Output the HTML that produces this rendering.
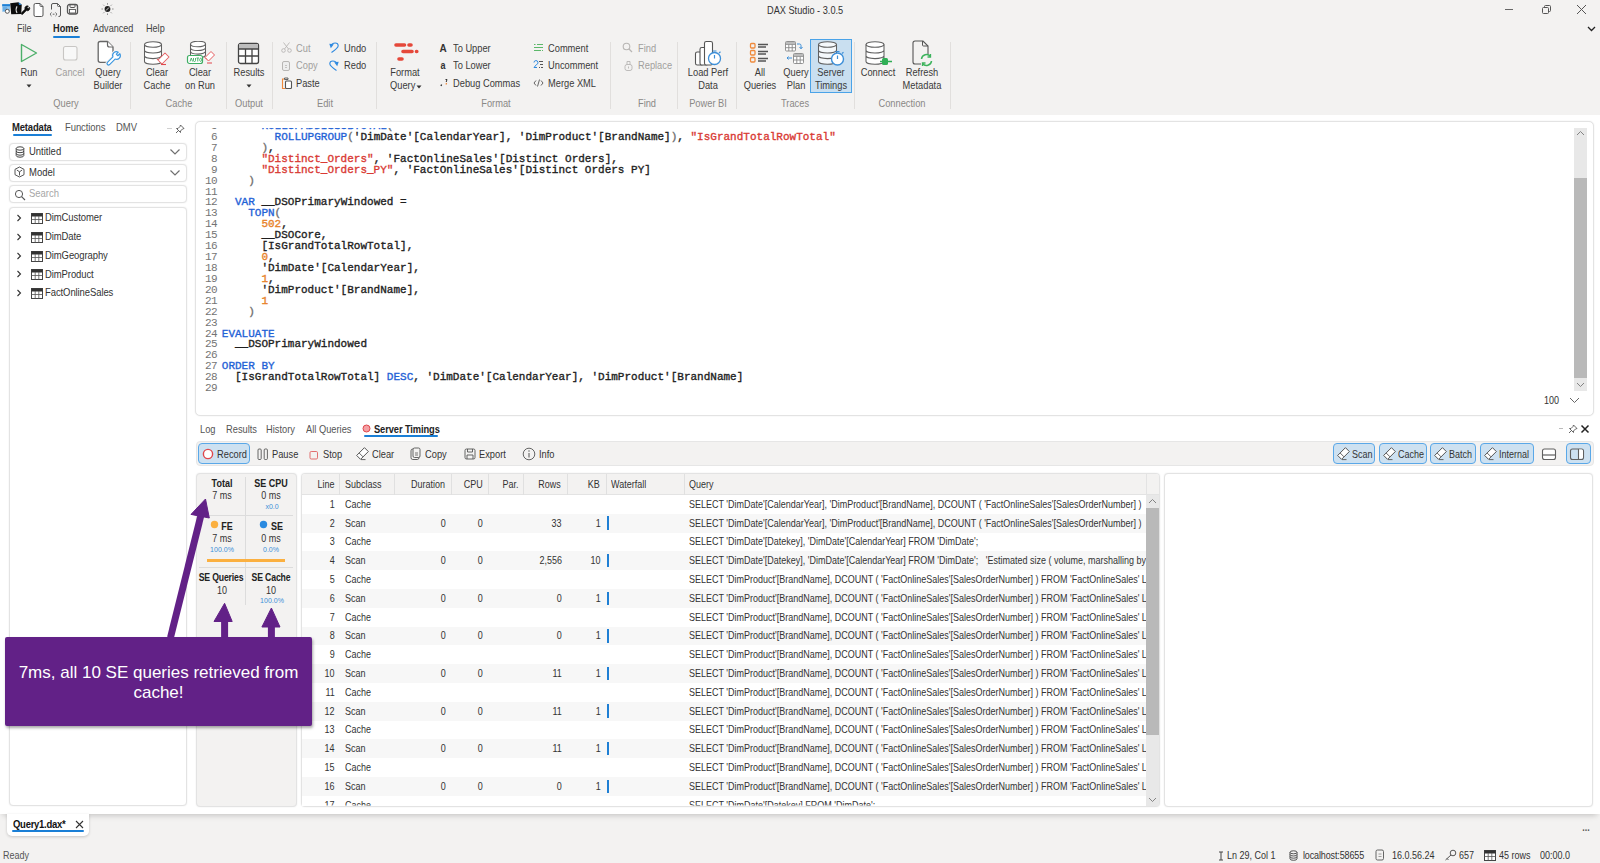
<!DOCTYPE html>
<html><head><meta charset="utf-8"><style>
html,body{margin:0;padding:0;}
body{width:1600px;height:863px;overflow:hidden;position:relative;background:#f3f2f1;font-family:"Liberation Sans", sans-serif;}
.a{position:absolute;box-sizing:border-box;}
.t{position:absolute;white-space:pre;font-family:"Liberation Sans", sans-serif;}
.code{position:absolute;font-family:"Liberation Mono", monospace;white-space:pre;-webkit-text-stroke-width:0.35px;}
</style></head><body>
<div class="a" style="left:0px;top:115px;width:1600px;height:699px;background:#fff;box-shadow:0 4px 6px -3px rgba(0,0,0,0.22);"></div><svg class="a" style="left:0px;top:0px;" width="32" height="18" viewBox="0 0 32 18" fill="none">
<rect x="2.2" y="4.2" width="7.8" height="7.6" fill="#8cc4ee"/>
<rect x="2.2" y="4.2" width="7.8" height="2" fill="#1f7fd4"/>
<path d="M3 8 h4 M3 10 h3" stroke="#3a8fd8" stroke-width="0.8"/>
<circle cx="7.3" cy="11.3" r="2" fill="#fff" stroke="#555" stroke-width="1"/>
<path d="M10.2 3.2 L18.5 2.2 L21.8 4.7 L21.2 14 L11.2 14.2 Z" fill="#0d0d0d"/>
<path d="M18.5 2.2 L21.8 4.7 L19 5 Z" fill="#2a88d8"/>
<path d="M17 6.2 Q15.2 9.5 17 13" stroke="#ddd" stroke-width="1.1" fill="none"/>
<path d="M21.41 12.81 L24.99 9.24 A2.47 2.47 0 0 1 28.46 6.12 L27.16 7.42 L28.18 8.44 L29.48 7.14 A2.47 2.47 0 0 1 26.36 10.61 L22.79 14.19 A0.98 0.98 0 0 1 21.41 12.81 Z" fill="#0d0d0d" stroke="#0d0d0d" stroke-width="0.6" stroke-linejoin="round"/>
</svg><svg class="a" style="left:32px;top:2px;" width="12" height="15" viewBox="0 0 12 15" fill="none"><path d="M2 3 a1.5 1.5 0 0 1 1.5-1.5 h4.5 l3 3 v8.5 a1.5 1.5 0 0 1-1.5 1.5 h-6 a1.5 1.5 0 0 1-1.5-1.5 z" stroke="#555" stroke-width="1" fill="#fff"/><path d="M8 1.5 v2 a1 1 0 0 0 1 1 h2" stroke="#555" stroke-width="0.9" fill="none"/></svg><svg class="a" style="left:49px;top:2px;" width="13" height="15" viewBox="0 0 13 15" fill="none"><path d="M2.5 7.5 v-4.5 a1.5 1.5 0 0 1 1.5-1.5 h4.5 l3 3 v8.5 a1.5 1.5 0 0 1-1.5 1.5 h-0.5" stroke="#555" stroke-width="1" fill="none"/><path d="M8.5 1.5 v2 a1 1 0 0 0 1 1 h2" stroke="#555" stroke-width="0.9" fill="none"/><path d="M2.5 10.5 a2 2 0 0 0 0 3.5 M6.5 10.5 a2 2 0 0 1 0 3.5 M3.7 12.2 h1.8" stroke="#555" stroke-width="0.9" fill="none"/></svg><svg class="a" style="left:66px;top:3px;" width="13" height="12" viewBox="0 0 13 12" fill="none"><rect x="1.5" y="1.5" width="10" height="9.5" rx="2" stroke="#555" stroke-width="1.3" fill="none"/><path d="M4 1.5 v2 a1 1 0 0 0 1 1 h3 a1 1 0 0 0 1-1 v-2" stroke="#555" stroke-width="1"/><rect x="3.5" y="6.5" width="6" height="3.5" fill="#fff" stroke="#555" stroke-width="0.9"/></svg><svg class="a" style="left:100px;top:2px;" width="15" height="15" viewBox="0 0 15 15" fill="none"><circle cx="7.5" cy="7" r="2.9" fill="#222"/><path d="M6 8.5 L9 5.5" stroke="#fff" stroke-width="0.8"/><g stroke="#888" stroke-width="0.9" stroke-linecap="round"><path d="M7.5 1.5v0.8M7.5 11.8v0.8M1.8 7h0.8M12.4 7h0.8M3.5 3l.5.5M11 10.5l.5.5M3.5 11l.5-.5M11 3.5l.5-.5"/></g></svg><div class="t" style="left:767px;top:4.64px;font-size:10.58px;line-height:10.58px;font-weight:400;color:#333;transform:scaleX(0.8696);transform-origin:left top;">DAX Studio - 3.0.5</div><div class="a" style="left:1505px;top:9px;width:8px;height:1px;background:#666;"></div><svg class="a" style="left:1541px;top:4px;" width="11" height="11" viewBox="0 0 11 11" fill="none"><rect x="1.5" y="3.5" width="6" height="6" rx="1" stroke="#555" stroke-width="1"/><path d="M3.5 3.5 v-1 a1 1 0 0 1 1-1 h4 a1 1 0 0 1 1 1 v4 a1 1 0 0 1-1 1 h-1" stroke="#555" stroke-width="1"/></svg><svg class="a" style="left:1576px;top:4px;" width="11" height="11" viewBox="0 0 11 11" fill="none"><path d="M1 1 L10 10 M10 1 L1 10" stroke="#555" stroke-width="1"/></svg><svg class="a" style="left:1587px;top:25.5px;" width="9" height="6" viewBox="0 0 9 6" fill="none"><path d="M1 1 L4.5 4.5 L8 1" stroke="#222" stroke-width="1.3"/></svg><div class="t" style="left:16.5px;top:23.54px;font-size:10.46px;line-height:10.46px;font-weight:400;color:#444;transform:scaleX(0.8696);transform-origin:left top;">File</div><div class="t" style="left:53px;top:23.44px;font-size:10.58px;line-height:10.58px;font-weight:700;color:#222;transform:scaleX(0.8696);transform-origin:left top;">Home</div><div class="a" style="left:53px;top:35.5px;width:27px;height:2px;background:#1a7fd6;border-radius:1px;"></div><div class="t" style="left:92.5px;top:23.54px;font-size:10.46px;line-height:10.46px;font-weight:400;color:#444;transform:scaleX(0.8696);transform-origin:left top;">Advanced</div><div class="t" style="left:146px;top:23.54px;font-size:10.46px;line-height:10.46px;font-weight:400;color:#444;transform:scaleX(0.8696);transform-origin:left top;">Help</div><svg class="a" style="left:19px;top:42px;" width="20" height="22" viewBox="0 0 20 22" fill="none"><path d="M2.5 2.5 L17.5 11 L2.5 19.5 Z" stroke="#4caf6a" stroke-width="1.4" fill="none" stroke-linejoin="round"/></svg><div class="t" style="left:-271px;width:600px;text-align:center;top:66.75px;font-size:10.70px;line-height:10.70px;font-weight:400;color:#3b3a39;transform:scaleX(0.8696);transform-origin:center top;">Run</div><svg class="a" style="left:25.5px;top:84px;" width="6" height="4" viewBox="0 0 6 4" fill="none"><path d="M0.5 0.5 h5 l-2.5 3 z" fill="#333"/></svg><svg class="a" style="left:62px;top:45px;" width="17" height="17" viewBox="0 0 17 17" fill="none"><rect x="1.5" y="1.5" width="13.5" height="13.5" rx="2" stroke="#c8c6c4" stroke-width="1.1" fill="#f8f8f8"/></svg><div class="t" style="left:-230px;width:600px;text-align:center;top:66.75px;font-size:10.70px;line-height:10.70px;font-weight:400;color:#a19f9d;transform:scaleX(0.8696);transform-origin:center top;">Cancel</div><svg class="a" style="left:90px;top:38px;" width="34" height="30" viewBox="0 0 34 30" fill="none"><path d="M8.2 5.5 a2 2 0 0 1 2-2 h7.3 l5.5 5.5 v13.3 a2 2 0 0 1-2 2 h-10.8 a2 2 0 0 1-2-2 z" stroke="#666" stroke-width="1.3" fill="#fff" stroke-linejoin="round"/><path d="M17.5 3.5 V7 a2 2 0 0 0 2 2 H23" stroke="#666" stroke-width="1.2" fill="#fff"/><path d="M17.44 24.44 L22.94 18.94 A3.8 3.8 0 0 1 28.29 14.15 L26.29 16.15 L27.85 17.71 L29.85 15.71 A3.8 3.8 0 0 1 25.06 21.06 L19.56 26.56 A1.5 1.5 0 0 1 17.44 24.44 Z" stroke="#f3f2f1" stroke-width="3" fill="#fff" stroke-linejoin="round"/><path d="M17.44 24.44 L22.94 18.94 A3.8 3.8 0 0 1 28.29 14.15 L26.29 16.15 L27.85 17.71 L29.85 15.71 A3.8 3.8 0 0 1 25.06 21.06 L19.56 26.56 A1.5 1.5 0 0 1 17.44 24.44 Z" stroke="#3d98e0" stroke-width="1.2" fill="#fff" stroke-linejoin="round"/></svg><div class="t" style="left:-192px;width:600px;text-align:center;top:66.75px;font-size:10.70px;line-height:10.70px;font-weight:400;color:#3b3a39;transform:scaleX(0.8696);transform-origin:center top;">Query</div><div class="t" style="left:-192px;width:600px;text-align:center;top:79.75px;font-size:10.70px;line-height:10.70px;font-weight:400;color:#3b3a39;transform:scaleX(0.8696);transform-origin:center top;">Builder</div><div class="a" style="left:130px;top:42px;width:1px;height:67px;background:#e1dfdd;"></div><div class="t" style="left:-234.5px;width:600px;text-align:center;top:97.95px;font-size:10.70px;line-height:10.70px;font-weight:400;color:#8a8886;transform:scaleX(0.8696);transform-origin:center top;">Query</div><svg class="a" style="left:143px;top:41px;" width="28" height="25" viewBox="0 0 28 25" fill="none"><path d="M1.5 3.5 v17 a8.5 2.8 0 0 0 17.0 0 v-17 a8.5 2.8 0 0 0 -17.0 0 z" fill="#fff"/><ellipse cx="10" cy="3.5" rx="8.5" ry="2.8" stroke="#606060" stroke-width="1.05" fill="none"/><path d="M1.5 3.5 v17 a8.5 2.8 0 0 0 17.0 0 v-17 M1.5 9.166666666666668 a8.5 2.8 0 0 0 17.0 0 M1.5 14.833333333333334 a8.5 2.8 0 0 0 17.0 0" stroke="#606060" stroke-width="1.05" fill="none"/><path d="M15 19 l7-7 l4 4 l-7 7 z M17 21 l-3-3" stroke="#e65c5f" stroke-width="1.05" fill="#fff" stroke-linejoin="round"/><path d="M18 23.5 h5" stroke="#e0474c" stroke-width="1.1"/></svg><div class="t" style="left:-143px;width:600px;text-align:center;top:66.75px;font-size:10.70px;line-height:10.70px;font-weight:400;color:#3b3a39;transform:scaleX(0.8696);transform-origin:center top;">Clear</div><div class="t" style="left:-143px;width:600px;text-align:center;top:79.75px;font-size:10.70px;line-height:10.70px;font-weight:400;color:#3b3a39;transform:scaleX(0.8696);transform-origin:center top;">Cache</div><svg class="a" style="left:186px;top:41px;" width="30" height="25" viewBox="0 0 30 25" fill="none"><path d="M4.5 3 v11 a7.5 2.8 0 0 0 15.0 0 v-11 a7.5 2.8 0 0 0 -15.0 0 z" fill="#fff"/><ellipse cx="12" cy="3" rx="7.5" ry="2.8" stroke="#606060" stroke-width="1.05" fill="none"/><path d="M4.5 3 v11 a7.5 2.8 0 0 0 15.0 0 v-11 M4.5 6.666666666666666 a7.5 2.8 0 0 0 15.0 0 M4.5 10.333333333333332 a7.5 2.8 0 0 0 15.0 0" stroke="#606060" stroke-width="1.05" fill="none"/><rect x="1.5" y="14.5" width="15" height="8" rx="2" stroke="#3fae64" stroke-width="1.2" fill="#fff"/><path d="M4 20.5 l1.3-3.5 l1.3 3.5 M7.5 17 v2.5 a1 1 0 0 0 2 0 v-2.5 M10.5 17 h2.5 M11.75 17 v3.5 M14.6 17.2 a1 1.6 0 1 0 0.1 0z" stroke="#3fae64" stroke-width="0.9" fill="none"/><path d="M19 16.5 l6-6 l3.5 3.5 l-6 6 z M21 18.5 l-2-2" stroke="#e65c5f" stroke-width="1.0" fill="#fff"/><path d="M21 22 h5" stroke="#e0474c" stroke-width="1"/></svg><div class="t" style="left:-100px;width:600px;text-align:center;top:66.75px;font-size:10.70px;line-height:10.70px;font-weight:400;color:#3b3a39;transform:scaleX(0.8696);transform-origin:center top;">Clear</div><div class="t" style="left:-100px;width:600px;text-align:center;top:79.75px;font-size:10.70px;line-height:10.70px;font-weight:400;color:#3b3a39;transform:scaleX(0.8696);transform-origin:center top;">on Run</div><div class="a" style="left:226px;top:42px;width:1px;height:67px;background:#e1dfdd;"></div><div class="t" style="left:-121.5px;width:600px;text-align:center;top:97.95px;font-size:10.70px;line-height:10.70px;font-weight:400;color:#8a8886;transform:scaleX(0.8696);transform-origin:center top;">Cache</div><svg class="a" style="left:237px;top:42px;" width="24" height="24" viewBox="0 0 24 24" fill="none"><rect x="1.5" y="1.5" width="20" height="20" rx="2" stroke="#444" stroke-width="1.3" fill="#fff"/><rect x="2" y="2" width="19" height="5" fill="#bdbdbd"/><path d="M1.5 7 h20 M1.5 14 h20 M8.5 7 v14.5 M15 7 v14.5" stroke="#444" stroke-width="1.3"/></svg><div class="t" style="left:-51.5px;width:600px;text-align:center;top:66.75px;font-size:10.70px;line-height:10.70px;font-weight:400;color:#3b3a39;transform:scaleX(0.8696);transform-origin:center top;">Results</div><svg class="a" style="left:245.5px;top:84px;" width="6" height="4" viewBox="0 0 6 4" fill="none"><path d="M0.5 0.5 h5 l-2.5 3 z" fill="#333"/></svg><div class="a" style="left:271.5px;top:42px;width:1px;height:67px;background:#e1dfdd;"></div><div class="t" style="left:-51.5px;width:600px;text-align:center;top:97.95px;font-size:10.70px;line-height:10.70px;font-weight:400;color:#8a8886;transform:scaleX(0.8696);transform-origin:center top;">Output</div><svg class="a" style="left:281px;top:42px;" width="11" height="11" viewBox="0 0 11 11" fill="none"><circle cx="2.5" cy="8.5" r="1.8" stroke="#b8b6b4" stroke-width="0.9"/><circle cx="8.5" cy="8.5" r="1.8" stroke="#b8b6b4" stroke-width="0.9"/><path d="M3.5 7 L8.5 0.5 M7.5 7 L2.5 0.5" stroke="#b8b6b4" stroke-width="0.9"/></svg><div class="t" style="left:296px;top:42.95px;font-size:10.70px;line-height:10.70px;font-weight:400;color:#a19f9d;transform:scaleX(0.8696);transform-origin:left top;">Cut</div><svg class="a" style="left:281px;top:60px;" width="10" height="11" viewBox="0 0 10 11" fill="none"><rect x="1.5" y="1.5" width="7" height="9" rx="1.5" stroke="#b8b6b4" stroke-width="1" fill="#eee"/><path d="M4 5.5 h2 M4 7.5 h2" stroke="#b8b6b4" stroke-width="0.8"/></svg><div class="t" style="left:296px;top:60.45px;font-size:10.70px;line-height:10.70px;font-weight:400;color:#a19f9d;transform:scaleX(0.8696);transform-origin:left top;">Copy</div><svg class="a" style="left:281px;top:77px;" width="12" height="12" viewBox="0 0 12 12" fill="none"><path d="M3 2 h-1.5 v9.5 h3" stroke="#f08a3c" stroke-width="1.1" fill="none"/><rect x="4.5" y="4" width="6" height="7.5" rx="1" stroke="#555" stroke-width="1.1" fill="#fff"/><path d="M3.5 2.5 h3.5 v-1.5 h-3.5z" stroke="#555" stroke-width="0.9"/></svg><div class="t" style="left:296px;top:77.95px;font-size:10.70px;line-height:10.70px;font-weight:400;color:#3b3a39;transform:scaleX(0.8696);transform-origin:left top;">Paste</div><svg class="a" style="left:328px;top:41px;" width="12" height="13" viewBox="0 0 12 13" fill="none"><path d="M3.2 4.5 C4.5 1.2, 10.2 1, 10.2 4.8 C10.2 6.8, 8 8.5, 3.5 11.5" stroke="#2f8ae0" stroke-width="1.1" fill="none"/><path d="M1.3 2.8 L5.8 3.3 L2.8 7.2 Z" fill="#2f8ae0"/></svg><div class="t" style="left:344px;top:42.95px;font-size:10.70px;line-height:10.70px;font-weight:400;color:#3b3a39;transform:scaleX(0.8696);transform-origin:left top;">Undo</div><svg class="a" style="left:328px;top:59px;" width="12" height="13" viewBox="0 0 12 13" fill="none"><path d="M8.8 4.5 C7.5 1.2, 1.8 1, 1.8 4.8 C1.8 6.8, 4 8.5, 8.5 11.5" stroke="#2f8ae0" stroke-width="1.1" fill="none"/><path d="M10.7 2.8 L6.2 3.3 L9.2 7.2 Z" fill="#2f8ae0"/></svg><div class="t" style="left:344px;top:60.45px;font-size:10.70px;line-height:10.70px;font-weight:400;color:#3b3a39;transform:scaleX(0.8696);transform-origin:left top;">Redo</div><div class="a" style="left:376px;top:42px;width:1px;height:67px;background:#e1dfdd;"></div><div class="t" style="left:25px;width:600px;text-align:center;top:97.95px;font-size:10.70px;line-height:10.70px;font-weight:400;color:#8a8886;transform:scaleX(0.8696);transform-origin:center top;">Edit</div><svg class="a" style="left:392px;top:42px;" width="28" height="21" viewBox="0 0 28 21" fill="none"><g stroke="#e5483a" stroke-width="3.6" stroke-linecap="round"><path d="M4 3 h8.5 M17 3 h2 M11 9.5 h9 M24.5 9.5 h0.3 M7 17 h3"/></g></svg><div class="t" style="left:105px;width:600px;text-align:center;top:66.95px;font-size:10.70px;line-height:10.70px;font-weight:400;color:#3b3a39;transform:scaleX(0.8696);transform-origin:center top;">Format</div><div class="t" style="left:390px;top:79.95px;font-size:10.70px;line-height:10.70px;font-weight:400;color:#3b3a39;transform:scaleX(0.8696);transform-origin:left top;">Query</div><svg class="a" style="left:416px;top:85px;" width="6" height="4" viewBox="0 0 6 4" fill="none"><path d="M0.5 0.5 h5 l-2.5 3 z" fill="#333"/></svg><div class="t" style="left:143px;width:600px;text-align:center;top:43.83px;font-size:10.00px;line-height:10.00px;font-weight:700;color:#333;">A</div><div class="t" style="left:453px;top:42.95px;font-size:10.70px;line-height:10.70px;font-weight:400;color:#3b3a39;transform:scaleX(0.8696);transform-origin:left top;">To Upper</div><div class="t" style="left:143px;width:600px;text-align:center;top:60.74px;font-size:10.35px;line-height:10.35px;font-weight:700;color:#333;transform:scaleX(0.8696);transform-origin:center top;">a</div><div class="t" style="left:453px;top:60.45px;font-size:10.70px;line-height:10.70px;font-weight:400;color:#3b3a39;transform:scaleX(0.8696);transform-origin:left top;">To Lower</div><svg class="a" style="left:439px;top:78px;" width="10" height="10" viewBox="0 0 10 10" fill="none"><path d="M2 8 l0.6-1.5" stroke="#333" stroke-width="1.3"/><path d="M7 6.5 l0.6-1.5" stroke="#f08a3c" stroke-width="1.3"/><path d="M6.5 1.5 l1.5 0 l-0.8 2.5" stroke="#333" stroke-width="1"/></svg><div class="t" style="left:453px;top:77.95px;font-size:10.70px;line-height:10.70px;font-weight:400;color:#3b3a39;transform:scaleX(0.8696);transform-origin:left top;">Debug Commas</div><svg class="a" style="left:533px;top:43px;" width="11" height="10" viewBox="0 0 11 10" fill="none"><g stroke="#5cb86a" stroke-width="1.2"><path d="M1 1.5 h1.5 M4 1.5 h6 M1 4.5 h9 M1 7.5 h7 M9 7.5 h1"/></g></svg><div class="t" style="left:548px;top:42.95px;font-size:10.70px;line-height:10.70px;font-weight:400;color:#3b3a39;transform:scaleX(0.8696);transform-origin:left top;">Comment</div><svg class="a" style="left:533px;top:60px;" width="11" height="10" viewBox="0 0 11 10" fill="none"><path d="M1 2.5 a2 2 0 1 1 2.5 2 l-2.5 3 h3" stroke="#2f8ae0" stroke-width="1" fill="none"/><g stroke="#555" stroke-width="1"><path d="M6 1.5 h4 M7 4.5 h3 M6 7.5 h1 M8 7.5 h2"/></g></svg><div class="t" style="left:548px;top:60.45px;font-size:10.70px;line-height:10.70px;font-weight:400;color:#3b3a39;transform:scaleX(0.8696);transform-origin:left top;">Uncomment</div><svg class="a" style="left:533px;top:78px;" width="11" height="10" viewBox="0 0 11 10" fill="none"><path d="M3 2.5 l-2 2.5 l2 2.5 M8 2.5 l2 2.5 l-2 2.5 M6.5 1.5 l-2 7" stroke="#555" stroke-width="0.9" fill="none"/></svg><div class="t" style="left:548px;top:77.95px;font-size:10.70px;line-height:10.70px;font-weight:400;color:#3b3a39;transform:scaleX(0.8696);transform-origin:left top;">Merge XML</div><div class="a" style="left:610px;top:42px;width:1px;height:67px;background:#e1dfdd;"></div><div class="t" style="left:196px;width:600px;text-align:center;top:97.95px;font-size:10.70px;line-height:10.70px;font-weight:400;color:#8a8886;transform:scaleX(0.8696);transform-origin:center top;">Format</div><svg class="a" style="left:622px;top:42px;" width="11" height="11" viewBox="0 0 11 11" fill="none"><circle cx="4.5" cy="4.5" r="3.3" stroke="#b8b6b4" stroke-width="1.1"/><path d="M7 7 L10 10" stroke="#b8b6b4" stroke-width="1.2"/></svg><div class="t" style="left:638px;top:42.95px;font-size:10.70px;line-height:10.70px;font-weight:400;color:#a19f9d;transform:scaleX(0.8696);transform-origin:left top;">Find</div><svg class="a" style="left:624px;top:60px;" width="9" height="11" viewBox="0 0 9 11" fill="none"><rect x="1" y="4.5" width="7" height="6" rx="2" stroke="#b8b6b4" stroke-width="0.9"/><path d="M3 4.5 v-3 h3 v3 M4.5 6.5 v2" stroke="#b8b6b4" stroke-width="0.9"/></svg><div class="t" style="left:638px;top:60.45px;font-size:10.70px;line-height:10.70px;font-weight:400;color:#a19f9d;transform:scaleX(0.8696);transform-origin:left top;">Replace</div><div class="a" style="left:677px;top:42px;width:1px;height:67px;background:#e1dfdd;"></div><div class="t" style="left:346.5px;width:600px;text-align:center;top:97.95px;font-size:10.70px;line-height:10.70px;font-weight:400;color:#8a8886;transform:scaleX(0.8696);transform-origin:center top;">Find</div><svg class="a" style="left:694px;top:40px;" width="30" height="27" viewBox="0 0 30 27" fill="none"><rect x="1.5" y="12" width="8" height="13" rx="1.8" stroke="#555" stroke-width="1.1" fill="#fff"/><rect x="6" y="7.5" width="8" height="17.5" rx="1.8" stroke="#555" stroke-width="1.1" fill="#fff"/><rect x="10.5" y="1.5" width="8" height="23.5" rx="1.8" stroke="#555" stroke-width="1.1" fill="#fff"/><circle cx="20.5" cy="18.5" r="6" stroke="#3d8fd8" stroke-width="1.3" fill="#fff"/><path d="M20.5 15 v3.5 M18.5 11 h4 M25 13 l1.5-1.2" stroke="#3d8fd8" stroke-width="1.2"/></svg><div class="t" style="left:408px;width:600px;text-align:center;top:66.75px;font-size:10.70px;line-height:10.70px;font-weight:400;color:#3b3a39;transform:scaleX(0.8696);transform-origin:center top;">Load Perf</div><div class="t" style="left:408px;width:600px;text-align:center;top:79.75px;font-size:10.70px;line-height:10.70px;font-weight:400;color:#3b3a39;transform:scaleX(0.8696);transform-origin:center top;">Data</div><div class="a" style="left:736px;top:42px;width:1px;height:67px;background:#e1dfdd;"></div><div class="t" style="left:407.5px;width:600px;text-align:center;top:97.95px;font-size:10.70px;line-height:10.70px;font-weight:400;color:#8a8886;transform:scaleX(0.8696);transform-origin:center top;">Power BI</div><svg class="a" style="left:749px;top:42px;" width="22" height="22" viewBox="0 0 22 22" fill="none"><g stroke="#ef8a3c" stroke-width="1.3" fill="none"><rect x="1.5" y="1.5" width="4.5" height="4.5" rx="1"/><rect x="1.5" y="8.5" width="4.5" height="4.5" rx="1"/><rect x="1.5" y="15.5" width="4.5" height="4.5" rx="1"/></g><g stroke="#555" stroke-width="1.3"><path d="M9 2.5 h10 M9 5 h8 M9 9.5 h10 M9 12 h8 M9 16.5 h10 M9 19 h8"/></g></svg><div class="t" style="left:459.5px;width:600px;text-align:center;top:66.75px;font-size:10.70px;line-height:10.70px;font-weight:400;color:#3b3a39;transform:scaleX(0.8696);transform-origin:center top;">All</div><div class="t" style="left:459.5px;width:600px;text-align:center;top:79.75px;font-size:10.70px;line-height:10.70px;font-weight:400;color:#3b3a39;transform:scaleX(0.8696);transform-origin:center top;">Queries</div><svg class="a" style="left:784px;top:41px;" width="21" height="25" viewBox="0 0 21 25" fill="none"><g stroke="#888" stroke-width="0.9" fill="#fff"><rect x="1.5" y="0.5" width="10" height="9.5" rx="1"/><path d="M1.5 3.5 h10 M1.5 6.7 h10 M4.8 0.5 v9.5 M8.2 0.5 v9.5"/><rect x="9.5" y="12.5" width="10" height="10" rx="1"/><path d="M9.5 15.5 h10 M9.5 19 h10 M12.8 12.5 v10 M16.2 12.5 v10"/></g><rect x="2" y="1" width="9" height="2.3" fill="#bbb"/><rect x="10" y="13" width="9" height="2.3" fill="#bbb"/><path d="M13 3 h2.5 a1.5 1.5 0 0 1 1.5 1.5 v3 M15.5 6 l1.5 1.8 l1.5-1.8 M8 17 h-5 M4.5 15.5 l-1.5 1.5 l1.5 1.5" stroke="#3d8fd8" stroke-width="1" fill="none"/></svg><div class="t" style="left:495.5px;width:600px;text-align:center;top:66.75px;font-size:10.70px;line-height:10.70px;font-weight:400;color:#3b3a39;transform:scaleX(0.8696);transform-origin:center top;">Query</div><div class="t" style="left:495.5px;width:600px;text-align:center;top:79.75px;font-size:10.70px;line-height:10.70px;font-weight:400;color:#3b3a39;transform:scaleX(0.8696);transform-origin:center top;">Plan</div><div class="a" style="left:810px;top:38.5px;width:42px;height:54px;background:#c9dff0;border:1px solid #4aa3e8;"></div><svg class="a" style="left:817px;top:41px;" width="30" height="26" viewBox="0 0 30 26" fill="none"><path d="M1.5 3.5 v17 a9 2.8 0 0 0 18 0 v-17 a9 2.8 0 0 0 -18 0 z" fill="#f4f8fb"/><ellipse cx="10.5" cy="3.5" rx="9" ry="2.8" stroke="#606060" stroke-width="1.05" fill="none"/><path d="M1.5 3.5 v17 a9 2.8 0 0 0 18 0 v-17 M1.5 9.166666666666668 a9 2.8 0 0 0 18 0 M1.5 14.833333333333334 a9 2.8 0 0 0 18 0" stroke="#606060" stroke-width="1.05" fill="none"/><circle cx="20.5" cy="18" r="6" stroke="#3d8fd8" stroke-width="1.4" fill="#fff"/><path d="M20.5 14.5 v3.5 M18.5 10.5 h4 M25 12.5 l1.5-1.2" stroke="#3d8fd8" stroke-width="1.2"/></svg><div class="t" style="left:531px;width:600px;text-align:center;top:66.75px;font-size:10.70px;line-height:10.70px;font-weight:400;color:#3b3a39;transform:scaleX(0.8696);transform-origin:center top;">Server</div><div class="t" style="left:531px;width:600px;text-align:center;top:79.75px;font-size:10.70px;line-height:10.70px;font-weight:400;color:#3b3a39;transform:scaleX(0.8696);transform-origin:center top;">Timings</div><div class="a" style="left:854px;top:42px;width:1px;height:67px;background:#e1dfdd;"></div><div class="t" style="left:495px;width:600px;text-align:center;top:97.95px;font-size:10.70px;line-height:10.70px;font-weight:400;color:#8a8886;transform:scaleX(0.8696);transform-origin:center top;">Traces</div><svg class="a" style="left:864px;top:41px;" width="30" height="26" viewBox="0 0 30 26" fill="none"><path d="M2 3.5 v17 a9 2.8 0 0 0 18 0 v-17 a9 2.8 0 0 0 -18 0 z" fill="#fff"/><ellipse cx="11" cy="3.5" rx="9" ry="2.8" stroke="#606060" stroke-width="1.05" fill="none"/><path d="M2 3.5 v17 a9 2.8 0 0 0 18 0 v-17 M2 9.166666666666668 a9 2.8 0 0 0 18 0 M2 14.833333333333334 a9 2.8 0 0 0 18 0" stroke="#606060" stroke-width="1.05" fill="none"/><path d="M16 20.5 h3 M24 20.5 h4" stroke="#2fae55" stroke-width="1.6"/><rect x="18" y="17" width="6" height="7" rx="1.5" fill="#2fae55"/></svg><div class="t" style="left:578px;width:600px;text-align:center;top:66.75px;font-size:10.70px;line-height:10.70px;font-weight:400;color:#3b3a39;transform:scaleX(0.8696);transform-origin:center top;">Connect</div><svg class="a" style="left:911px;top:40px;" width="26" height="27" viewBox="0 0 26 27" fill="none"><path d="M2 3 a2 2 0 0 1 2-2 h8 l5 5 v8 M10 24 h-6 a2 2 0 0 1-2-2 v-19" stroke="#555" stroke-width="1.1" fill="none"/><path d="M11.5 1 v4 a1 1 0 0 0 1 1 h4.5" stroke="#555" stroke-width="1"/><path d="M10.5 19 a5 5 0 0 1 9-2.5 M20.5 21 a5 5 0 0 1 -9 2.5" stroke="#3cb35c" stroke-width="1.5" fill="none"/><path d="M19.5 14 v3 h-3 M11.5 26 v-3 h3" stroke="#3cb35c" stroke-width="1.3" fill="none"/></svg><div class="t" style="left:622px;width:600px;text-align:center;top:66.75px;font-size:10.70px;line-height:10.70px;font-weight:400;color:#3b3a39;transform:scaleX(0.8696);transform-origin:center top;">Refresh</div><div class="t" style="left:622px;width:600px;text-align:center;top:79.75px;font-size:10.70px;line-height:10.70px;font-weight:400;color:#3b3a39;transform:scaleX(0.8696);transform-origin:center top;">Metadata</div><div class="a" style="left:950px;top:42px;width:1px;height:67px;background:#e1dfdd;"></div><div class="t" style="left:602px;width:600px;text-align:center;top:97.95px;font-size:10.70px;line-height:10.70px;font-weight:400;color:#8a8886;transform:scaleX(0.8696);transform-origin:center top;">Connection</div><div class="t" style="left:12px;top:122.25px;font-size:10.92px;line-height:10.92px;font-weight:700;color:#222;transform:scaleX(0.8696);transform-origin:left top;letter-spacing:-0.2px;">Metadata</div><div class="a" style="left:13px;top:134px;width:39px;height:2px;background:#1a7fd6;border-radius:1px;"></div><div class="t" style="left:65px;top:122.25px;font-size:10.92px;line-height:10.92px;font-weight:400;color:#555;transform:scaleX(0.8696);transform-origin:left top;letter-spacing:-0.1px;">Functions</div><div class="t" style="left:116px;top:122.25px;font-size:10.92px;line-height:10.92px;font-weight:400;color:#555;transform:scaleX(0.8696);transform-origin:left top;">DMV</div><div class="a" style="left:167px;top:127.5px;width:4.5px;height:1px;background:#d0d0d0;"></div><svg class="a" style="left:175px;top:124px;" width="10" height="10" viewBox="0 0 10 10" fill="none"><path d="M5.5 1 L9 4.5 L7.5 5 L5.5 7 L5.5 8.5 L1.5 4.5 L3 4.5 L5 2.5 Z M3.5 6.5 L1 9" stroke="#555" stroke-width="0.9" fill="none" stroke-linejoin="round"/></svg><div class="a" style="left:9.3px;top:143px;width:178.2px;height:18px;border:1px solid #e3e3e3;border-radius:4px;background:#fff;box-shadow:0 0 1.5px rgba(0,0,0,0.10);"></div><div class="a" style="left:9.3px;top:164px;width:178.2px;height:18px;border:1px solid #e3e3e3;border-radius:4px;background:#fff;box-shadow:0 0 1.5px rgba(0,0,0,0.10);"></div><div class="a" style="left:9.3px;top:185px;width:178.2px;height:18px;border:1px solid #e3e3e3;border-radius:4px;background:#fff;box-shadow:0 0 1.5px rgba(0,0,0,0.10);"></div><div class="a" style="left:9.3px;top:207px;width:178.2px;height:599px;border:1px solid #e3e3e3;border-radius:4px;background:#fff;box-shadow:0 0 1.5px rgba(0,0,0,0.10);"></div><svg class="a" style="left:15px;top:146px;" width="10" height="12" viewBox="0 0 10 12" fill="none"><ellipse cx="5" cy="2.5" rx="3.8" ry="1.7" stroke="#444" stroke-width="1"/><path d="M1.2 2.5 v7 a3.8 1.7 0 0 0 7.6 0 v-7 M1.2 5 a3.8 1.7 0 0 0 7.6 0 M1.2 7.5 a3.8 1.7 0 0 0 7.6 0" stroke="#444" stroke-width="1"/></svg><div class="t" style="left:29px;top:146.25px;font-size:10.92px;line-height:10.92px;font-weight:400;color:#333;transform:scaleX(0.8696);transform-origin:left top;">Untitled</div><svg class="a" style="left:169px;top:148px;" width="12" height="7" viewBox="0 0 12 7" fill="none"><path d="M1.5 1.5 L6 6 L10.5 1.5" stroke="#707070" stroke-width="1.2"/></svg><svg class="a" style="left:14px;top:166px;" width="11" height="12" viewBox="0 0 11 12" fill="none"><path d="M5.5 1 L10 3.3 L10 8.7 L5.5 11 L1 8.7 L1 3.3 Z" stroke="#444" stroke-width="0.9" fill="none" stroke-linejoin="round"/><path d="M2.8 4 L5.5 5.8 L8.2 4 M5.5 5.8 V9.5" stroke="#444" stroke-width="0.9" fill="none"/></svg><div class="t" style="left:29px;top:167.25px;font-size:10.92px;line-height:10.92px;font-weight:400;color:#333;transform:scaleX(0.8696);transform-origin:left top;">Model</div><svg class="a" style="left:169px;top:169px;" width="12" height="7" viewBox="0 0 12 7" fill="none"><path d="M1.5 1.5 L6 6 L10.5 1.5" stroke="#707070" stroke-width="1.2"/></svg><svg class="a" style="left:14px;top:189px;" width="12" height="12" viewBox="0 0 12 12" fill="none"><circle cx="5" cy="5" r="3.6" stroke="#555" stroke-width="1"/><path d="M7.6 7.6 L11 11" stroke="#555" stroke-width="1.1"/></svg><div class="t" style="left:29px;top:188.25px;font-size:10.92px;line-height:10.92px;font-weight:400;color:#a6a6a6;transform:scaleX(0.8696);transform-origin:left top;">Search</div><svg class="a" style="left:15.7px;top:214.0px;" width="6" height="8" viewBox="0 0 6 8" fill="none"><path d="M1.5 1 L4.5 4 L1.5 7" stroke="#333" stroke-width="1.1" fill="none"/></svg><svg class="a" style="left:31px;top:213.0px;" width="12" height="11" viewBox="0 0 12 11" fill="none"><rect x="0.5" y="0.5" width="11" height="10" fill="#fff" stroke="#444" stroke-width="1"/><rect x="0.5" y="0.5" width="11" height="3" fill="#333"/><path d="M0.5 6.5 h11 M4.2 3 v7.5 M7.8 3 v7.5" stroke="#555" stroke-width="0.8"/></svg><div class="t" style="left:45px;top:212.45px;font-size:10.92px;line-height:10.92px;font-weight:400;color:#333;transform:scaleX(0.8696);transform-origin:left top;letter-spacing:-0.1px;">DimCustomer</div><svg class="a" style="left:15.7px;top:232.75px;" width="6" height="8" viewBox="0 0 6 8" fill="none"><path d="M1.5 1 L4.5 4 L1.5 7" stroke="#333" stroke-width="1.1" fill="none"/></svg><svg class="a" style="left:31px;top:231.75px;" width="12" height="11" viewBox="0 0 12 11" fill="none"><rect x="0.5" y="0.5" width="11" height="10" fill="#fff" stroke="#444" stroke-width="1"/><rect x="0.5" y="0.5" width="11" height="3" fill="#333"/><path d="M0.5 6.5 h11 M4.2 3 v7.5 M7.8 3 v7.5" stroke="#555" stroke-width="0.8"/></svg><div class="t" style="left:45px;top:231.20px;font-size:10.92px;line-height:10.92px;font-weight:400;color:#333;transform:scaleX(0.8696);transform-origin:left top;letter-spacing:-0.1px;">DimDate</div><svg class="a" style="left:15.7px;top:251.5px;" width="6" height="8" viewBox="0 0 6 8" fill="none"><path d="M1.5 1 L4.5 4 L1.5 7" stroke="#333" stroke-width="1.1" fill="none"/></svg><svg class="a" style="left:31px;top:250.5px;" width="12" height="11" viewBox="0 0 12 11" fill="none"><rect x="0.5" y="0.5" width="11" height="10" fill="#fff" stroke="#444" stroke-width="1"/><rect x="0.5" y="0.5" width="11" height="3" fill="#333"/><path d="M0.5 6.5 h11 M4.2 3 v7.5 M7.8 3 v7.5" stroke="#555" stroke-width="0.8"/></svg><div class="t" style="left:45px;top:249.95px;font-size:10.92px;line-height:10.92px;font-weight:400;color:#333;transform:scaleX(0.8696);transform-origin:left top;letter-spacing:-0.1px;">DimGeography</div><svg class="a" style="left:15.7px;top:270.25px;" width="6" height="8" viewBox="0 0 6 8" fill="none"><path d="M1.5 1 L4.5 4 L1.5 7" stroke="#333" stroke-width="1.1" fill="none"/></svg><svg class="a" style="left:31px;top:269.25px;" width="12" height="11" viewBox="0 0 12 11" fill="none"><rect x="0.5" y="0.5" width="11" height="10" fill="#fff" stroke="#444" stroke-width="1"/><rect x="0.5" y="0.5" width="11" height="3" fill="#333"/><path d="M0.5 6.5 h11 M4.2 3 v7.5 M7.8 3 v7.5" stroke="#555" stroke-width="0.8"/></svg><div class="t" style="left:45px;top:268.70px;font-size:10.92px;line-height:10.92px;font-weight:400;color:#333;transform:scaleX(0.8696);transform-origin:left top;letter-spacing:-0.1px;">DimProduct</div><svg class="a" style="left:15.7px;top:289.0px;" width="6" height="8" viewBox="0 0 6 8" fill="none"><path d="M1.5 1 L4.5 4 L1.5 7" stroke="#333" stroke-width="1.1" fill="none"/></svg><svg class="a" style="left:31px;top:288.0px;" width="12" height="11" viewBox="0 0 12 11" fill="none"><rect x="0.5" y="0.5" width="11" height="10" fill="#fff" stroke="#444" stroke-width="1"/><rect x="0.5" y="0.5" width="11" height="3" fill="#333"/><path d="M0.5 6.5 h11 M4.2 3 v7.5 M7.8 3 v7.5" stroke="#555" stroke-width="0.8"/></svg><div class="t" style="left:45px;top:287.45px;font-size:10.92px;line-height:10.92px;font-weight:400;color:#333;transform:scaleX(0.8696);transform-origin:left top;letter-spacing:-0.1px;">FactOnlineSales</div><div class="a" style="left:194.5px;top:121px;width:1399px;height:295px;border:1px solid #e3e3e3;border-radius:5px;background:#fff;box-shadow:0 0 1.5px rgba(0,0,0,0.10);"></div><div class="a" style="left:196px;top:127.6px;width:1377px;height:268px;overflow:hidden;"><div class="code" style="left:-0.7px;top:-6.61999999999999px;width:22px;text-align:right;font-size:11px;line-height:10.92px;color:#747474;letter-spacing:-0.4px;-webkit-text-stroke-width:0px;">5
6
7
8
9
10
11
12
13
14
15
16
17
18
19
20
21
22
23
24
25
26
27
28
29</div><div class="code" style="left:25.80000000000001px;top:-6.61999999999999px;font-size:11px;line-height:10.92px;color:#1e1e1e;">      <span style="color:#1f62d6">ROLLUPADDISSUBTOTAL</span><span style="color:#707070">(</span>
        <span style="color:#1f62d6">ROLLUPGROUP</span><span style="color:#707070">(</span>&#x27;DimDate&#x27;[CalendarYear], &#x27;DimProduct&#x27;[BrandName]<span style="color:#707070">)</span>, <span style="color:#d93a34">&quot;IsGrandTotalRowTotal&quot;</span>
      <span style="color:#707070">)</span>,
      <span style="color:#d93a34">&quot;Distinct_Orders&quot;</span>, &#x27;FactOnlineSales&#x27;[Distinct Orders],
      <span style="color:#d93a34">&quot;Distinct_Orders_PY&quot;</span>, &#x27;FactOnlineSales&#x27;[Distinct Orders PY]
    <span style="color:#707070">)</span>

  <span style="color:#1f62d6">VAR</span> __DSOPrimaryWindowed =
    <span style="color:#1f62d6">TOPN</span><span style="color:#707070">(</span>
      <span style="color:#e8832a">502</span>,
      __DSOCore,
      [IsGrandTotalRowTotal],
      <span style="color:#e8832a">0</span>,
      &#x27;DimDate&#x27;[CalendarYear],
      <span style="color:#e8832a">1</span>,
      &#x27;DimProduct&#x27;[BrandName],
      <span style="color:#e8832a">1</span>
    <span style="color:#707070">)</span>

<span style="color:#1f62d6">EVALUATE</span>
  __DSOPrimaryWindowed

<span style="color:#1f62d6">ORDER BY</span>
  [IsGrandTotalRowTotal] <span style="color:#1f62d6">DESC</span>, &#x27;DimDate&#x27;[CalendarYear], &#x27;DimProduct&#x27;[BrandName]
</div></div><div class="a" style="left:1574px;top:127.5px;width:13px;height:263px;background:#e8e8e8;"></div><div class="a" style="left:1574px;top:177.5px;width:13px;height:200.5px;background:#b9b9b9;"></div><svg class="a" style="left:1576px;top:130px;" width="9" height="6" viewBox="0 0 9 6" fill="none"><path d="M1 5 L4.5 1.5 L8 5" stroke="#777" stroke-width="0.9"/></svg><svg class="a" style="left:1576px;top:382px;" width="9" height="6" viewBox="0 0 9 6" fill="none"><path d="M1 1 L4.5 4.5 L8 1" stroke="#777" stroke-width="0.9"/></svg><div class="t" style="left:1544px;top:395.74px;font-size:10.35px;line-height:10.35px;font-weight:400;color:#333;transform:scaleX(0.8696);transform-origin:left top;">100</div><svg class="a" style="left:1569px;top:397px;" width="11" height="7" viewBox="0 0 11 7" fill="none"><path d="M1 1 L5.5 5.5 L10 1" stroke="#555" stroke-width="0.9"/></svg><div class="t" style="left:200px;top:423.65px;font-size:10.70px;line-height:10.70px;font-weight:400;color:#555;transform:scaleX(0.8696);transform-origin:left top;">Log</div><div class="t" style="left:226px;top:423.65px;font-size:10.70px;line-height:10.70px;font-weight:400;color:#555;transform:scaleX(0.8696);transform-origin:left top;">Results</div><div class="t" style="left:266px;top:423.65px;font-size:10.70px;line-height:10.70px;font-weight:400;color:#555;transform:scaleX(0.8696);transform-origin:left top;">History</div><div class="t" style="left:306px;top:423.65px;font-size:10.70px;line-height:10.70px;font-weight:400;color:#555;transform:scaleX(0.8696);transform-origin:left top;">All Queries</div><svg class="a" style="left:361.5px;top:423.5px;" width="9" height="9" viewBox="0 0 9 9" fill="none"><circle cx="4.5" cy="4.5" r="3.5" fill="#f4a0a4" stroke="#e0474c" stroke-width="1"/></svg><div class="t" style="left:374px;top:423.65px;font-size:10.70px;line-height:10.70px;font-weight:700;color:#222;transform:scaleX(0.8696);transform-origin:left top;letter-spacing:-0.1px;">Server Timings</div><div class="a" style="left:363.5px;top:434.5px;width:74.5px;height:2px;background:#1a7fd6;border-radius:1px;"></div><div class="a" style="left:1559px;top:428px;width:4px;height:1px;background:#bbb;"></div><svg class="a" style="left:1568px;top:424px;" width="10" height="10" viewBox="0 0 10 10" fill="none"><path d="M5.5 1 L9 4.5 L7.5 5 L5.5 7 L5.5 8.5 L1.5 4.5 L3 4.5 L5 2.5 Z M3.5 6.5 L1 9" stroke="#555" stroke-width="0.9" fill="none" stroke-linejoin="round"/></svg><svg class="a" style="left:1580px;top:424px;" width="10" height="10" viewBox="0 0 10 10" fill="none"><path d="M1.5 1.5 L8.5 8.5 M8.5 1.5 L1.5 8.5" stroke="#222" stroke-width="1.5"/></svg><div class="a" style="left:195.5px;top:441px;width:1398px;height:25px;background:#f3f2f1;border:1px solid #e6e6e6;border-radius:4px;"></div><div class="a" style="left:197.5px;top:443.3px;width:52.5px;height:20.7px;background:#cde1f1;border:1.5px solid #5aa8e8;border-radius:4px;"></div><svg class="a" style="left:200.8px;top:447px;" width="14" height="14" viewBox="0 0 14 14" fill="none"><circle cx="7" cy="7" r="4.6" stroke="#e0474c" stroke-width="1.4" fill="#fff"/></svg><div class="t" style="left:217px;top:449.45px;font-size:10.70px;line-height:10.70px;font-weight:400;color:#333;transform:scaleX(0.8696);transform-origin:left top;">Record</div><svg class="a" style="left:257px;top:447.5px;" width="12" height="13" viewBox="0 0 12 13" fill="none"><rect x="1" y="1" width="3.2" height="10.5" rx="1" stroke="#555" stroke-width="0.9"/><rect x="7.2" y="1" width="3.2" height="10.5" rx="1" stroke="#555" stroke-width="0.9"/></svg><div class="t" style="left:272px;top:449.45px;font-size:10.70px;line-height:10.70px;font-weight:400;color:#333;transform:scaleX(0.8696);transform-origin:left top;">Pause</div><svg class="a" style="left:308.5px;top:449.5px;" width="10" height="10" viewBox="0 0 10 10" fill="none"><rect x="1" y="1.5" width="7.5" height="7.5" rx="1.2" stroke="#e06060" stroke-width="0.9"/></svg><div class="t" style="left:323px;top:449.45px;font-size:10.70px;line-height:10.70px;font-weight:400;color:#333;transform:scaleX(0.8696);transform-origin:left top;">Stop</div><svg class="a" style="left:356px;top:447px;" width="14" height="14" viewBox="0 0 14 14" fill="none"><path d="M12.33 4.55 L8.45 0.67 L0.67 8.45 L4.55 12.33 Z" stroke="#555" stroke-width="1" fill="#fff" stroke-linejoin="round"/><path d="M3.15 5.97 L7.03 9.85" stroke="#555" stroke-width="0.9"/><path d="M5 12.6 H9.5" stroke="#555" stroke-width="0.9"/></svg><div class="t" style="left:372px;top:449.45px;font-size:10.70px;line-height:10.70px;font-weight:400;color:#333;transform:scaleX(0.8696);transform-origin:left top;">Clear</div><svg class="a" style="left:410px;top:447px;" width="11" height="14" viewBox="0 0 11 14" fill="none"><rect x="1" y="2" width="8" height="10.5" rx="1.8" stroke="#555" stroke-width="0.9"/><rect x="3" y="1" width="7" height="9.5" rx="1.5" stroke="#555" stroke-width="0.9" fill="#f3f2f1"/><path d="M5 6 h3 M5 8 h3" stroke="#555" stroke-width="0.8"/></svg><div class="t" style="left:425px;top:449.45px;font-size:10.70px;line-height:10.70px;font-weight:400;color:#333;transform:scaleX(0.8696);transform-origin:left top;">Copy</div><svg class="a" style="left:464px;top:448px;" width="12" height="12" viewBox="0 0 12 12" fill="none"><rect x="1" y="1" width="10" height="10" rx="1.5" stroke="#555" stroke-width="0.9"/><path d="M3.5 1 v3 h5 v-3 M3 11 v-4 h6 v4" stroke="#555" stroke-width="0.9"/></svg><div class="t" style="left:479px;top:449.45px;font-size:10.70px;line-height:10.70px;font-weight:400;color:#333;transform:scaleX(0.8696);transform-origin:left top;">Export</div><svg class="a" style="left:522px;top:447px;" width="14" height="14" viewBox="0 0 14 14" fill="none"><circle cx="7" cy="7" r="5.8" stroke="#555" stroke-width="0.9"/><path d="M7 6 v4.5" stroke="#555" stroke-width="1"/><circle cx="7" cy="4" r="0.7" fill="#555"/></svg><div class="t" style="left:539px;top:449.45px;font-size:10.70px;line-height:10.70px;font-weight:400;color:#333;transform:scaleX(0.8696);transform-origin:left top;">Info</div><div class="a" style="left:1333px;top:443.3px;width:42px;height:20.7px;background:#cde1f1;border:1.5px solid #5aa8e8;border-radius:4px;"></div><svg class="a" style="left:1337px;top:447px;" width="14" height="14" viewBox="0 0 14 14" fill="none"><path d="M12.33 4.55 L8.45 0.67 L0.67 8.45 L4.55 12.33 Z" stroke="#555" stroke-width="1" fill="#fff" stroke-linejoin="round"/><path d="M3.15 5.97 L7.03 9.85" stroke="#555" stroke-width="0.9"/><path d="M5 12.6 H9.5" stroke="#555" stroke-width="0.9"/></svg><div class="t" style="left:1352px;top:449.74px;font-size:10.35px;line-height:10.35px;font-weight:400;color:#333;transform:scaleX(0.8696);transform-origin:left top;">Scan</div><div class="a" style="left:1378.5px;top:443.3px;width:48px;height:20.7px;background:#cde1f1;border:1.5px solid #5aa8e8;border-radius:4px;"></div><svg class="a" style="left:1382.5px;top:447px;" width="14" height="14" viewBox="0 0 14 14" fill="none"><path d="M12.33 4.55 L8.45 0.67 L0.67 8.45 L4.55 12.33 Z" stroke="#555" stroke-width="1" fill="#fff" stroke-linejoin="round"/><path d="M3.15 5.97 L7.03 9.85" stroke="#555" stroke-width="0.9"/><path d="M5 12.6 H9.5" stroke="#555" stroke-width="0.9"/></svg><div class="t" style="left:1397.5px;top:449.74px;font-size:10.35px;line-height:10.35px;font-weight:400;color:#333;transform:scaleX(0.8696);transform-origin:left top;">Cache</div><div class="a" style="left:1430px;top:443.3px;width:46px;height:20.7px;background:#cde1f1;border:1.5px solid #5aa8e8;border-radius:4px;"></div><svg class="a" style="left:1434px;top:447px;" width="14" height="14" viewBox="0 0 14 14" fill="none"><path d="M12.33 4.55 L8.45 0.67 L0.67 8.45 L4.55 12.33 Z" stroke="#555" stroke-width="1" fill="#fff" stroke-linejoin="round"/><path d="M3.15 5.97 L7.03 9.85" stroke="#555" stroke-width="0.9"/><path d="M5 12.6 H9.5" stroke="#555" stroke-width="0.9"/></svg><div class="t" style="left:1449px;top:449.74px;font-size:10.35px;line-height:10.35px;font-weight:400;color:#333;transform:scaleX(0.8696);transform-origin:left top;">Batch</div><div class="a" style="left:1480px;top:443.3px;width:54px;height:20.7px;background:#cde1f1;border:1.5px solid #5aa8e8;border-radius:4px;"></div><svg class="a" style="left:1484px;top:447px;" width="14" height="14" viewBox="0 0 14 14" fill="none"><path d="M12.33 4.55 L8.45 0.67 L0.67 8.45 L4.55 12.33 Z" stroke="#555" stroke-width="1" fill="#fff" stroke-linejoin="round"/><path d="M3.15 5.97 L7.03 9.85" stroke="#555" stroke-width="0.9"/><path d="M5 12.6 H9.5" stroke="#555" stroke-width="0.9"/></svg><div class="t" style="left:1499px;top:449.74px;font-size:10.35px;line-height:10.35px;font-weight:400;color:#333;transform:scaleX(0.8696);transform-origin:left top;">Internal</div><svg class="a" style="left:1540.5px;top:447.5px;" width="16" height="13" viewBox="0 0 16 13" fill="none"><rect x="1.5" y="1" width="13" height="10.5" rx="2" stroke="#606060" stroke-width="1.1" fill="#fff"/><path d="M1.5 7 h13" stroke="#606060" stroke-width="1.2"/></svg><div class="a" style="left:1565.5px;top:443.3px;width:25px;height:20.7px;background:#cde1f1;border:1.5px solid #5aa8e8;border-radius:4px;"></div><svg class="a" style="left:1569px;top:447.5px;" width="16" height="13" viewBox="0 0 16 13" fill="none"><rect x="1.5" y="1" width="13" height="10.5" rx="2" stroke="#606060" stroke-width="1.1" fill="#cde1f1"/><path d="M9.5 1.5 h3 a1.5 1.5 0 0 1 1.5 1.5 v6 a1.5 1.5 0 0 1 -1.5 1.5 h-3 z" fill="#fff"/><path d="M9.5 1 v10.5" stroke="#606060" stroke-width="1.1"/></svg><div class="a" style="left:195.5px;top:473px;width:101.5px;height:333.5px;background:#f3f2f1;border:1px solid #e3e3e3;border-radius:4px;box-shadow:0 0 1.5px rgba(0,0,0,0.10);"></div><div class="a" style="left:245px;top:477px;width:1px;height:128px;background:#dcdcdc;"></div><div class="a" style="left:199px;top:515px;width:94px;height:1px;background:#dcdcdc;"></div><div class="a" style="left:199px;top:566.5px;width:94px;height:1px;background:#dcdcdc;"></div><div class="t" style="left:-78.5px;width:600px;text-align:center;top:478.54px;font-size:10.35px;line-height:10.35px;font-weight:700;color:#222;transform:scaleX(0.8696);transform-origin:center top;">Total</div><div class="t" style="left:-78.5px;width:600px;text-align:center;top:491.04px;font-size:10.35px;line-height:10.35px;font-weight:400;color:#333;transform:scaleX(0.8696);transform-origin:center top;">7 ms</div><div class="t" style="left:-29px;width:600px;text-align:center;top:478.54px;font-size:10.35px;line-height:10.35px;font-weight:700;color:#222;transform:scaleX(0.8696);transform-origin:center top;">SE CPU</div><div class="t" style="left:-29px;width:600px;text-align:center;top:491.04px;font-size:10.35px;line-height:10.35px;font-weight:400;color:#333;transform:scaleX(0.8696);transform-origin:center top;">0 ms</div><div class="t" style="left:-28.5px;width:600px;text-align:center;top:503.19px;font-size:8.05px;line-height:8.05px;font-weight:400;color:#3d8fd8;transform:scaleX(0.8696);transform-origin:center top;">x0.0</div><svg class="a" style="left:210px;top:520px;" width="9" height="9" viewBox="0 0 9 9" fill="none"><circle cx="4.5" cy="4.5" r="3.7" fill="#fbb040"/></svg><div class="t" style="left:-73px;width:600px;text-align:center;top:521.54px;font-size:10.35px;line-height:10.35px;font-weight:700;color:#222;transform:scaleX(0.8696);transform-origin:center top;">FE</div><svg class="a" style="left:259px;top:520px;" width="9" height="9" viewBox="0 0 9 9" fill="none"><circle cx="4.5" cy="4.5" r="3.7" fill="#2a8ae0"/></svg><div class="t" style="left:-23.5px;width:600px;text-align:center;top:521.54px;font-size:10.35px;line-height:10.35px;font-weight:700;color:#222;transform:scaleX(0.8696);transform-origin:center top;">SE</div><div class="t" style="left:-78.5px;width:600px;text-align:center;top:533.74px;font-size:10.35px;line-height:10.35px;font-weight:400;color:#333;transform:scaleX(0.8696);transform-origin:center top;">7 ms</div><div class="t" style="left:-29px;width:600px;text-align:center;top:533.74px;font-size:10.35px;line-height:10.35px;font-weight:400;color:#333;transform:scaleX(0.8696);transform-origin:center top;">0 ms</div><div class="t" style="left:-78.5px;width:600px;text-align:center;top:545.69px;font-size:8.05px;line-height:8.05px;font-weight:400;color:#3d8fd8;transform:scaleX(0.8696);transform-origin:center top;">100.0%</div><div class="t" style="left:-29px;width:600px;text-align:center;top:545.69px;font-size:8.05px;line-height:8.05px;font-weight:400;color:#3d8fd8;transform:scaleX(0.8696);transform-origin:center top;">0.0%</div><div class="a" style="left:207px;top:559px;width:78px;height:3px;background:#fbb040;"></div><div class="t" style="left:-79px;width:600px;text-align:center;top:572.83px;font-size:10.00px;line-height:10.00px;font-weight:700;color:#222;transform:scaleX(0.8696);transform-origin:center top;letter-spacing:-0.2px;">SE Queries</div><div class="t" style="left:-29px;width:600px;text-align:center;top:572.83px;font-size:10.00px;line-height:10.00px;font-weight:700;color:#222;transform:scaleX(0.8696);transform-origin:center top;letter-spacing:-0.2px;">SE Cache</div><div class="t" style="left:-78.5px;width:600px;text-align:center;top:586.04px;font-size:10.35px;line-height:10.35px;font-weight:400;color:#333;transform:scaleX(0.8696);transform-origin:center top;">10</div><div class="t" style="left:-29px;width:600px;text-align:center;top:586.04px;font-size:10.35px;line-height:10.35px;font-weight:400;color:#333;transform:scaleX(0.8696);transform-origin:center top;">10</div><div class="t" style="left:-28.5px;width:600px;text-align:center;top:597.49px;font-size:8.05px;line-height:8.05px;font-weight:400;color:#3d8fd8;transform:scaleX(0.8696);transform-origin:center top;">100.0%</div><div class="a" style="left:301px;top:473px;width:859px;height:333.5px;background:#fff;border:1px solid #e3e3e3;border-radius:4px;overflow:hidden;box-shadow:0 0 1.5px rgba(0,0,0,0.10);"></div><div class="a" style="left:302px;top:474px;width:844px;height:21px;background:#f3f2f1;border-bottom:1px solid #e3e3e3;border-radius:3px 0 0 0;"></div><div class="a" style="left:1146px;top:474px;width:13px;height:21px;background:#f3f2f1;border-left:1px solid #e3e3e3;border-bottom:1px solid #e3e3e3;border-radius:0 3px 0 0;"></div><div class="a" style="left:339px;top:474px;width:1px;height:21px;background:#e0e0e0;"></div><div class="a" style="left:394px;top:474px;width:1px;height:21px;background:#e0e0e0;"></div><div class="a" style="left:450.5px;top:474px;width:1px;height:21px;background:#e0e0e0;"></div><div class="a" style="left:487.5px;top:474px;width:1px;height:21px;background:#e0e0e0;"></div><div class="a" style="left:523px;top:474px;width:1px;height:21px;background:#e0e0e0;"></div><div class="a" style="left:567px;top:474px;width:1px;height:21px;background:#e0e0e0;"></div><div class="a" style="left:605.5px;top:474px;width:1px;height:21px;background:#e0e0e0;"></div><div class="a" style="left:683.75px;top:474px;width:1px;height:21px;background:#e0e0e0;"></div><div class="t" style="right:1265px;top:480.44px;font-size:10.35px;line-height:10.35px;font-weight:400;color:#333;transform:scaleX(0.8696);transform-origin:right top;">Line</div><div class="t" style="left:344.5px;top:480.44px;font-size:10.35px;line-height:10.35px;font-weight:400;color:#333;transform:scaleX(0.8696);transform-origin:left top;">Subclass</div><div class="t" style="right:1155px;top:480.44px;font-size:10.35px;line-height:10.35px;font-weight:400;color:#333;transform:scaleX(0.8696);transform-origin:right top;">Duration</div><div class="t" style="right:1117.5px;top:480.44px;font-size:10.35px;line-height:10.35px;font-weight:400;color:#333;transform:scaleX(0.8696);transform-origin:right top;">CPU</div><div class="t" style="right:1082px;top:480.44px;font-size:10.35px;line-height:10.35px;font-weight:400;color:#333;transform:scaleX(0.8696);transform-origin:right top;">Par.</div><div class="t" style="right:1039px;top:480.44px;font-size:10.35px;line-height:10.35px;font-weight:400;color:#333;transform:scaleX(0.8696);transform-origin:right top;">Rows</div><div class="t" style="right:1000px;top:480.44px;font-size:10.35px;line-height:10.35px;font-weight:400;color:#333;transform:scaleX(0.8696);transform-origin:right top;">KB</div><div class="t" style="left:611px;top:480.44px;font-size:10.35px;line-height:10.35px;font-weight:400;color:#333;transform:scaleX(0.8696);transform-origin:left top;">Waterfall</div><div class="t" style="left:689px;top:480.44px;font-size:10.35px;line-height:10.35px;font-weight:400;color:#333;transform:scaleX(0.8696);transform-origin:left top;">Query</div><div class="a" style="left:302px;top:495px;width:844px;height:310.5px;overflow:hidden;"><div class="a" style="left:0;top:0.00px;width:844px;height:18.8px;background:#fff;"></div><div class="a" style="left:0;top:18.80px;width:844px;height:18.8px;background:#f7f7f7;"></div><div class="a" style="left:0;top:37.60px;width:844px;height:18.8px;background:#fff;"></div><div class="a" style="left:0;top:56.40px;width:844px;height:18.8px;background:#f7f7f7;"></div><div class="a" style="left:0;top:75.20px;width:844px;height:18.8px;background:#fff;"></div><div class="a" style="left:0;top:94.00px;width:844px;height:18.8px;background:#f7f7f7;"></div><div class="a" style="left:0;top:112.80px;width:844px;height:18.8px;background:#fff;"></div><div class="a" style="left:0;top:131.60px;width:844px;height:18.8px;background:#f7f7f7;"></div><div class="a" style="left:0;top:150.40px;width:844px;height:18.8px;background:#fff;"></div><div class="a" style="left:0;top:169.20px;width:844px;height:18.8px;background:#f7f7f7;"></div><div class="a" style="left:0;top:188.00px;width:844px;height:18.8px;background:#fff;"></div><div class="a" style="left:0;top:206.80px;width:844px;height:18.8px;background:#f7f7f7;"></div><div class="a" style="left:0;top:225.60px;width:844px;height:18.8px;background:#fff;"></div><div class="a" style="left:0;top:244.40px;width:844px;height:18.8px;background:#f7f7f7;"></div><div class="a" style="left:0;top:263.20px;width:844px;height:18.8px;background:#fff;"></div><div class="a" style="left:0;top:282.00px;width:844px;height:18.8px;background:#f7f7f7;"></div><div class="a" style="left:0;top:300.80px;width:844px;height:18.8px;background:#fff;"></div></div><div class="a" style="left:0;top:0;width:1600px;height:863px;clip-path:inset(495px 454px 57.5px 302px);"><div class="t" style="right:1265px;top:499.84px;font-size:10.35px;line-height:10.35px;font-weight:400;color:#333;transform:scaleX(0.8696);transform-origin:right top;">1</div><div class="t" style="left:344.5px;top:499.84px;font-size:10.35px;line-height:10.35px;font-weight:400;color:#333;transform:scaleX(0.8696);transform-origin:left top;">Cache</div><div class="t" style="left:689px;top:499.84px;font-size:10.35px;line-height:10.35px;font-weight:400;color:#333;transform:scaleX(0.8696);transform-origin:left top;width:525.55px;overflow:hidden;">SELECT &#x27;DimDate&#x27;[CalendarYear], &#x27;DimProduct&#x27;[BrandName], DCOUNT ( &#x27;FactOnlineSales&#x27;[SalesOrderNumber] )</div><div class="t" style="right:1265px;top:518.64px;font-size:10.35px;line-height:10.35px;font-weight:400;color:#333;transform:scaleX(0.8696);transform-origin:right top;">2</div><div class="t" style="left:344.5px;top:518.64px;font-size:10.35px;line-height:10.35px;font-weight:400;color:#333;transform:scaleX(0.8696);transform-origin:left top;">Scan</div><div class="t" style="right:1154px;top:518.64px;font-size:10.35px;line-height:10.35px;font-weight:400;color:#333;transform:scaleX(0.8696);transform-origin:right top;">0</div><div class="t" style="right:1117px;top:518.64px;font-size:10.35px;line-height:10.35px;font-weight:400;color:#333;transform:scaleX(0.8696);transform-origin:right top;">0</div><div class="t" style="right:1038px;top:518.64px;font-size:10.35px;line-height:10.35px;font-weight:400;color:#333;transform:scaleX(0.8696);transform-origin:right top;">33</div><div class="t" style="right:999.5px;top:518.64px;font-size:10.35px;line-height:10.35px;font-weight:400;color:#333;transform:scaleX(0.8696);transform-origin:right top;">1</div><div class="a" style="left:606.5px;top:516.3px;width:2.5px;height:13.5px;background:#1f7fd4;"></div><div class="t" style="left:689px;top:518.64px;font-size:10.35px;line-height:10.35px;font-weight:400;color:#333;transform:scaleX(0.8696);transform-origin:left top;width:525.55px;overflow:hidden;">SELECT &#x27;DimDate&#x27;[CalendarYear], &#x27;DimProduct&#x27;[BrandName], DCOUNT ( &#x27;FactOnlineSales&#x27;[SalesOrderNumber] )</div><div class="t" style="right:1265px;top:537.44px;font-size:10.35px;line-height:10.35px;font-weight:400;color:#333;transform:scaleX(0.8696);transform-origin:right top;">3</div><div class="t" style="left:344.5px;top:537.44px;font-size:10.35px;line-height:10.35px;font-weight:400;color:#333;transform:scaleX(0.8696);transform-origin:left top;">Cache</div><div class="t" style="left:689px;top:537.44px;font-size:10.35px;line-height:10.35px;font-weight:400;color:#333;transform:scaleX(0.8696);transform-origin:left top;width:525.55px;overflow:hidden;">SELECT &#x27;DimDate&#x27;[Datekey], &#x27;DimDate&#x27;[CalendarYear] FROM &#x27;DimDate&#x27;;</div><div class="t" style="right:1265px;top:556.24px;font-size:10.35px;line-height:10.35px;font-weight:400;color:#333;transform:scaleX(0.8696);transform-origin:right top;">4</div><div class="t" style="left:344.5px;top:556.24px;font-size:10.35px;line-height:10.35px;font-weight:400;color:#333;transform:scaleX(0.8696);transform-origin:left top;">Scan</div><div class="t" style="right:1154px;top:556.24px;font-size:10.35px;line-height:10.35px;font-weight:400;color:#333;transform:scaleX(0.8696);transform-origin:right top;">0</div><div class="t" style="right:1117px;top:556.24px;font-size:10.35px;line-height:10.35px;font-weight:400;color:#333;transform:scaleX(0.8696);transform-origin:right top;">0</div><div class="t" style="right:1038px;top:556.24px;font-size:10.35px;line-height:10.35px;font-weight:400;color:#333;transform:scaleX(0.8696);transform-origin:right top;">2,556</div><div class="t" style="right:999.5px;top:556.24px;font-size:10.35px;line-height:10.35px;font-weight:400;color:#333;transform:scaleX(0.8696);transform-origin:right top;">10</div><div class="a" style="left:606.5px;top:553.9px;width:2.5px;height:13.5px;background:#1f7fd4;"></div><div class="t" style="left:689px;top:556.24px;font-size:10.35px;line-height:10.35px;font-weight:400;color:#333;transform:scaleX(0.8696);transform-origin:left top;width:525.55px;overflow:hidden;">SELECT &#x27;DimDate&#x27;[Datekey], &#x27;DimDate&#x27;[CalendarYear] FROM &#x27;DimDate&#x27;;   &#x27;Estimated size ( volume, marshalling bytes ) : 2556, 20448&#x27;</div><div class="t" style="right:1265px;top:575.04px;font-size:10.35px;line-height:10.35px;font-weight:400;color:#333;transform:scaleX(0.8696);transform-origin:right top;">5</div><div class="t" style="left:344.5px;top:575.04px;font-size:10.35px;line-height:10.35px;font-weight:400;color:#333;transform:scaleX(0.8696);transform-origin:left top;">Cache</div><div class="t" style="left:689px;top:575.04px;font-size:10.35px;line-height:10.35px;font-weight:400;color:#333;transform:scaleX(0.8696);transform-origin:left top;width:525.55px;overflow:hidden;">SELECT &#x27;DimProduct&#x27;[BrandName], DCOUNT ( &#x27;FactOnlineSales&#x27;[SalesOrderNumber] ) FROM &#x27;FactOnlineSales&#x27; LEFT OUTER JOIN &#x27;DimProduct&#x27;</div><div class="t" style="right:1265px;top:593.84px;font-size:10.35px;line-height:10.35px;font-weight:400;color:#333;transform:scaleX(0.8696);transform-origin:right top;">6</div><div class="t" style="left:344.5px;top:593.84px;font-size:10.35px;line-height:10.35px;font-weight:400;color:#333;transform:scaleX(0.8696);transform-origin:left top;">Scan</div><div class="t" style="right:1154px;top:593.84px;font-size:10.35px;line-height:10.35px;font-weight:400;color:#333;transform:scaleX(0.8696);transform-origin:right top;">0</div><div class="t" style="right:1117px;top:593.84px;font-size:10.35px;line-height:10.35px;font-weight:400;color:#333;transform:scaleX(0.8696);transform-origin:right top;">0</div><div class="t" style="right:1038px;top:593.84px;font-size:10.35px;line-height:10.35px;font-weight:400;color:#333;transform:scaleX(0.8696);transform-origin:right top;">0</div><div class="t" style="right:999.5px;top:593.84px;font-size:10.35px;line-height:10.35px;font-weight:400;color:#333;transform:scaleX(0.8696);transform-origin:right top;">1</div><div class="a" style="left:606.5px;top:591.5px;width:2.5px;height:13.5px;background:#1f7fd4;"></div><div class="t" style="left:689px;top:593.84px;font-size:10.35px;line-height:10.35px;font-weight:400;color:#333;transform:scaleX(0.8696);transform-origin:left top;width:525.55px;overflow:hidden;">SELECT &#x27;DimProduct&#x27;[BrandName], DCOUNT ( &#x27;FactOnlineSales&#x27;[SalesOrderNumber] ) FROM &#x27;FactOnlineSales&#x27; LEFT OUTER JOIN &#x27;DimProduct&#x27;</div><div class="t" style="right:1265px;top:612.64px;font-size:10.35px;line-height:10.35px;font-weight:400;color:#333;transform:scaleX(0.8696);transform-origin:right top;">7</div><div class="t" style="left:344.5px;top:612.64px;font-size:10.35px;line-height:10.35px;font-weight:400;color:#333;transform:scaleX(0.8696);transform-origin:left top;">Cache</div><div class="t" style="left:689px;top:612.64px;font-size:10.35px;line-height:10.35px;font-weight:400;color:#333;transform:scaleX(0.8696);transform-origin:left top;width:525.55px;overflow:hidden;">SELECT &#x27;DimProduct&#x27;[BrandName], DCOUNT ( &#x27;FactOnlineSales&#x27;[SalesOrderNumber] ) FROM &#x27;FactOnlineSales&#x27; LEFT OUTER JOIN &#x27;DimProduct&#x27;</div><div class="t" style="right:1265px;top:631.44px;font-size:10.35px;line-height:10.35px;font-weight:400;color:#333;transform:scaleX(0.8696);transform-origin:right top;">8</div><div class="t" style="left:344.5px;top:631.44px;font-size:10.35px;line-height:10.35px;font-weight:400;color:#333;transform:scaleX(0.8696);transform-origin:left top;">Scan</div><div class="t" style="right:1154px;top:631.44px;font-size:10.35px;line-height:10.35px;font-weight:400;color:#333;transform:scaleX(0.8696);transform-origin:right top;">0</div><div class="t" style="right:1117px;top:631.44px;font-size:10.35px;line-height:10.35px;font-weight:400;color:#333;transform:scaleX(0.8696);transform-origin:right top;">0</div><div class="t" style="right:1038px;top:631.44px;font-size:10.35px;line-height:10.35px;font-weight:400;color:#333;transform:scaleX(0.8696);transform-origin:right top;">0</div><div class="t" style="right:999.5px;top:631.44px;font-size:10.35px;line-height:10.35px;font-weight:400;color:#333;transform:scaleX(0.8696);transform-origin:right top;">1</div><div class="a" style="left:606.5px;top:629.1px;width:2.5px;height:13.5px;background:#1f7fd4;"></div><div class="t" style="left:689px;top:631.44px;font-size:10.35px;line-height:10.35px;font-weight:400;color:#333;transform:scaleX(0.8696);transform-origin:left top;width:525.55px;overflow:hidden;">SELECT &#x27;DimProduct&#x27;[BrandName], DCOUNT ( &#x27;FactOnlineSales&#x27;[SalesOrderNumber] ) FROM &#x27;FactOnlineSales&#x27; LEFT OUTER JOIN &#x27;DimProduct&#x27;</div><div class="t" style="right:1265px;top:650.24px;font-size:10.35px;line-height:10.35px;font-weight:400;color:#333;transform:scaleX(0.8696);transform-origin:right top;">9</div><div class="t" style="left:344.5px;top:650.24px;font-size:10.35px;line-height:10.35px;font-weight:400;color:#333;transform:scaleX(0.8696);transform-origin:left top;">Cache</div><div class="t" style="left:689px;top:650.24px;font-size:10.35px;line-height:10.35px;font-weight:400;color:#333;transform:scaleX(0.8696);transform-origin:left top;width:525.55px;overflow:hidden;">SELECT &#x27;DimProduct&#x27;[BrandName], DCOUNT ( &#x27;FactOnlineSales&#x27;[SalesOrderNumber] ) FROM &#x27;FactOnlineSales&#x27; LEFT OUTER JOIN &#x27;DimProduct&#x27;</div><div class="t" style="right:1265px;top:669.04px;font-size:10.35px;line-height:10.35px;font-weight:400;color:#333;transform:scaleX(0.8696);transform-origin:right top;">10</div><div class="t" style="left:344.5px;top:669.04px;font-size:10.35px;line-height:10.35px;font-weight:400;color:#333;transform:scaleX(0.8696);transform-origin:left top;">Scan</div><div class="t" style="right:1154px;top:669.04px;font-size:10.35px;line-height:10.35px;font-weight:400;color:#333;transform:scaleX(0.8696);transform-origin:right top;">0</div><div class="t" style="right:1117px;top:669.04px;font-size:10.35px;line-height:10.35px;font-weight:400;color:#333;transform:scaleX(0.8696);transform-origin:right top;">0</div><div class="t" style="right:1038px;top:669.04px;font-size:10.35px;line-height:10.35px;font-weight:400;color:#333;transform:scaleX(0.8696);transform-origin:right top;">11</div><div class="t" style="right:999.5px;top:669.04px;font-size:10.35px;line-height:10.35px;font-weight:400;color:#333;transform:scaleX(0.8696);transform-origin:right top;">1</div><div class="a" style="left:606.5px;top:666.7px;width:2.5px;height:13.5px;background:#1f7fd4;"></div><div class="t" style="left:689px;top:669.04px;font-size:10.35px;line-height:10.35px;font-weight:400;color:#333;transform:scaleX(0.8696);transform-origin:left top;width:525.55px;overflow:hidden;">SELECT &#x27;DimProduct&#x27;[BrandName], DCOUNT ( &#x27;FactOnlineSales&#x27;[SalesOrderNumber] ) FROM &#x27;FactOnlineSales&#x27; LEFT OUTER JOIN &#x27;DimProduct&#x27;</div><div class="t" style="right:1265px;top:687.84px;font-size:10.35px;line-height:10.35px;font-weight:400;color:#333;transform:scaleX(0.8696);transform-origin:right top;">11</div><div class="t" style="left:344.5px;top:687.84px;font-size:10.35px;line-height:10.35px;font-weight:400;color:#333;transform:scaleX(0.8696);transform-origin:left top;">Cache</div><div class="t" style="left:689px;top:687.84px;font-size:10.35px;line-height:10.35px;font-weight:400;color:#333;transform:scaleX(0.8696);transform-origin:left top;width:525.55px;overflow:hidden;">SELECT &#x27;DimProduct&#x27;[BrandName], DCOUNT ( &#x27;FactOnlineSales&#x27;[SalesOrderNumber] ) FROM &#x27;FactOnlineSales&#x27; LEFT OUTER JOIN &#x27;DimProduct&#x27;</div><div class="t" style="right:1265px;top:706.64px;font-size:10.35px;line-height:10.35px;font-weight:400;color:#333;transform:scaleX(0.8696);transform-origin:right top;">12</div><div class="t" style="left:344.5px;top:706.64px;font-size:10.35px;line-height:10.35px;font-weight:400;color:#333;transform:scaleX(0.8696);transform-origin:left top;">Scan</div><div class="t" style="right:1154px;top:706.64px;font-size:10.35px;line-height:10.35px;font-weight:400;color:#333;transform:scaleX(0.8696);transform-origin:right top;">0</div><div class="t" style="right:1117px;top:706.64px;font-size:10.35px;line-height:10.35px;font-weight:400;color:#333;transform:scaleX(0.8696);transform-origin:right top;">0</div><div class="t" style="right:1038px;top:706.64px;font-size:10.35px;line-height:10.35px;font-weight:400;color:#333;transform:scaleX(0.8696);transform-origin:right top;">11</div><div class="t" style="right:999.5px;top:706.64px;font-size:10.35px;line-height:10.35px;font-weight:400;color:#333;transform:scaleX(0.8696);transform-origin:right top;">1</div><div class="a" style="left:606.5px;top:704.3px;width:2.5px;height:13.5px;background:#1f7fd4;"></div><div class="t" style="left:689px;top:706.64px;font-size:10.35px;line-height:10.35px;font-weight:400;color:#333;transform:scaleX(0.8696);transform-origin:left top;width:525.55px;overflow:hidden;">SELECT &#x27;DimProduct&#x27;[BrandName], DCOUNT ( &#x27;FactOnlineSales&#x27;[SalesOrderNumber] ) FROM &#x27;FactOnlineSales&#x27; LEFT OUTER JOIN &#x27;DimProduct&#x27;</div><div class="t" style="right:1265px;top:725.44px;font-size:10.35px;line-height:10.35px;font-weight:400;color:#333;transform:scaleX(0.8696);transform-origin:right top;">13</div><div class="t" style="left:344.5px;top:725.44px;font-size:10.35px;line-height:10.35px;font-weight:400;color:#333;transform:scaleX(0.8696);transform-origin:left top;">Cache</div><div class="t" style="left:689px;top:725.44px;font-size:10.35px;line-height:10.35px;font-weight:400;color:#333;transform:scaleX(0.8696);transform-origin:left top;width:525.55px;overflow:hidden;">SELECT &#x27;DimProduct&#x27;[BrandName], DCOUNT ( &#x27;FactOnlineSales&#x27;[SalesOrderNumber] ) FROM &#x27;FactOnlineSales&#x27; LEFT OUTER JOIN &#x27;DimProduct&#x27;</div><div class="t" style="right:1265px;top:744.24px;font-size:10.35px;line-height:10.35px;font-weight:400;color:#333;transform:scaleX(0.8696);transform-origin:right top;">14</div><div class="t" style="left:344.5px;top:744.24px;font-size:10.35px;line-height:10.35px;font-weight:400;color:#333;transform:scaleX(0.8696);transform-origin:left top;">Scan</div><div class="t" style="right:1154px;top:744.24px;font-size:10.35px;line-height:10.35px;font-weight:400;color:#333;transform:scaleX(0.8696);transform-origin:right top;">0</div><div class="t" style="right:1117px;top:744.24px;font-size:10.35px;line-height:10.35px;font-weight:400;color:#333;transform:scaleX(0.8696);transform-origin:right top;">0</div><div class="t" style="right:1038px;top:744.24px;font-size:10.35px;line-height:10.35px;font-weight:400;color:#333;transform:scaleX(0.8696);transform-origin:right top;">11</div><div class="t" style="right:999.5px;top:744.24px;font-size:10.35px;line-height:10.35px;font-weight:400;color:#333;transform:scaleX(0.8696);transform-origin:right top;">1</div><div class="a" style="left:606.5px;top:741.9px;width:2.5px;height:13.5px;background:#1f7fd4;"></div><div class="t" style="left:689px;top:744.24px;font-size:10.35px;line-height:10.35px;font-weight:400;color:#333;transform:scaleX(0.8696);transform-origin:left top;width:525.55px;overflow:hidden;">SELECT &#x27;DimProduct&#x27;[BrandName], DCOUNT ( &#x27;FactOnlineSales&#x27;[SalesOrderNumber] ) FROM &#x27;FactOnlineSales&#x27; LEFT OUTER JOIN &#x27;DimProduct&#x27;</div><div class="t" style="right:1265px;top:763.04px;font-size:10.35px;line-height:10.35px;font-weight:400;color:#333;transform:scaleX(0.8696);transform-origin:right top;">15</div><div class="t" style="left:344.5px;top:763.04px;font-size:10.35px;line-height:10.35px;font-weight:400;color:#333;transform:scaleX(0.8696);transform-origin:left top;">Cache</div><div class="t" style="left:689px;top:763.04px;font-size:10.35px;line-height:10.35px;font-weight:400;color:#333;transform:scaleX(0.8696);transform-origin:left top;width:525.55px;overflow:hidden;">SELECT &#x27;DimProduct&#x27;[BrandName], DCOUNT ( &#x27;FactOnlineSales&#x27;[SalesOrderNumber] ) FROM &#x27;FactOnlineSales&#x27; LEFT OUTER JOIN &#x27;DimProduct&#x27;</div><div class="t" style="right:1265px;top:781.84px;font-size:10.35px;line-height:10.35px;font-weight:400;color:#333;transform:scaleX(0.8696);transform-origin:right top;">16</div><div class="t" style="left:344.5px;top:781.84px;font-size:10.35px;line-height:10.35px;font-weight:400;color:#333;transform:scaleX(0.8696);transform-origin:left top;">Scan</div><div class="t" style="right:1154px;top:781.84px;font-size:10.35px;line-height:10.35px;font-weight:400;color:#333;transform:scaleX(0.8696);transform-origin:right top;">0</div><div class="t" style="right:1117px;top:781.84px;font-size:10.35px;line-height:10.35px;font-weight:400;color:#333;transform:scaleX(0.8696);transform-origin:right top;">0</div><div class="t" style="right:1038px;top:781.84px;font-size:10.35px;line-height:10.35px;font-weight:400;color:#333;transform:scaleX(0.8696);transform-origin:right top;">0</div><div class="t" style="right:999.5px;top:781.84px;font-size:10.35px;line-height:10.35px;font-weight:400;color:#333;transform:scaleX(0.8696);transform-origin:right top;">1</div><div class="a" style="left:606.5px;top:779.5px;width:2.5px;height:13.5px;background:#1f7fd4;"></div><div class="t" style="left:689px;top:781.84px;font-size:10.35px;line-height:10.35px;font-weight:400;color:#333;transform:scaleX(0.8696);transform-origin:left top;width:525.55px;overflow:hidden;">SELECT &#x27;DimProduct&#x27;[BrandName], DCOUNT ( &#x27;FactOnlineSales&#x27;[SalesOrderNumber] ) FROM &#x27;FactOnlineSales&#x27; LEFT OUTER JOIN &#x27;DimProduct&#x27;</div><div class="t" style="right:1265px;top:800.64px;font-size:10.35px;line-height:10.35px;font-weight:400;color:#333;transform:scaleX(0.8696);transform-origin:right top;">17</div><div class="t" style="left:344.5px;top:800.64px;font-size:10.35px;line-height:10.35px;font-weight:400;color:#333;transform:scaleX(0.8696);transform-origin:left top;">Cache</div><div class="t" style="left:689px;top:800.64px;font-size:10.35px;line-height:10.35px;font-weight:400;color:#333;transform:scaleX(0.8696);transform-origin:left top;width:525.55px;overflow:hidden;">SELECT &#x27;DimDate&#x27;[Datekey] FROM &#x27;DimDate&#x27;;</div></div><div class="a" style="left:1146px;top:495px;width:13px;height:310.5px;background:#e8e8e8;"></div><div class="a" style="left:1146px;top:508px;width:13px;height:227px;background:#b9b9b9;"></div><svg class="a" style="left:1148px;top:498px;" width="9" height="6" viewBox="0 0 9 6" fill="none"><path d="M1 5 L4.5 1.5 L8 5" stroke="#777" stroke-width="0.9"/></svg><svg class="a" style="left:1148px;top:797px;" width="9" height="6" viewBox="0 0 9 6" fill="none"><path d="M1 1 L4.5 4.5 L8 1" stroke="#777" stroke-width="0.9"/></svg><div class="a" style="left:1164px;top:473px;width:429px;height:333.5px;background:#fff;border:1px solid #e3e3e3;border-radius:4px;box-shadow:0 0 1.5px rgba(0,0,0,0.10);"></div><div class="a" style="left:7px;top:814px;width:82px;height:22px;background:#fff;border-radius:0 0 5px 5px;box-shadow:0 1px 3px rgba(0,0,0,0.18);"></div><div class="t" style="left:12.5px;top:819.05px;font-size:10.92px;line-height:10.92px;font-weight:700;color:#111;transform:scaleX(0.8696);transform-origin:left top;letter-spacing:-0.3px;">Query1.dax*</div><svg class="a" style="left:75px;top:820px;" width="9" height="9" viewBox="0 0 9 9" fill="none"><path d="M1 1 L8 8 M8 1 L1 8" stroke="#333" stroke-width="1.1"/></svg><div class="a" style="left:12px;top:830px;width:72px;height:2px;background:#1a7fd6;border-radius:1px;"></div><div class="t" style="left:1285.5px;width:600px;text-align:center;top:823.24px;font-size:10.35px;line-height:10.35px;font-weight:700;color:#555;transform:scaleX(0.8696);transform-origin:center top;">...</div><div class="t" style="left:3px;top:851.24px;font-size:10.35px;line-height:10.35px;font-weight:400;color:#555;transform:scaleX(0.8696);transform-origin:left top;">Ready</div><svg class="a" style="left:1218px;top:851px;" width="6" height="10" viewBox="0 0 6 10" fill="none"><path d="M1 1 h4 M1 9 h4 M3 1 v8" stroke="#444" stroke-width="1"/></svg><div class="t" style="left:1226.5px;top:851.24px;font-size:10.35px;line-height:10.35px;font-weight:400;color:#333;transform:scaleX(0.8696);transform-origin:left top;">Ln 29, Col 1</div><svg class="a" style="left:1289px;top:850px;" width="9" height="11" viewBox="0 0 9 11" fill="none"><ellipse cx="4.5" cy="2.3" rx="3.5" ry="1.5" stroke="#444" stroke-width="0.9"/><path d="M1 2.3 v6.5 a3.5 1.5 0 0 0 7 0 v-6.5 M1 4.5 a3.5 1.5 0 0 0 7 0 M1 6.7 a3.5 1.5 0 0 0 7 0" stroke="#444" stroke-width="0.9"/></svg><div class="t" style="left:1302.5px;top:851.24px;font-size:10.35px;line-height:10.35px;font-weight:400;color:#333;transform:scaleX(0.8696);transform-origin:left top;letter-spacing:-0.15px;">localhost:58655</div><svg class="a" style="left:1375px;top:849px;" width="10" height="12" viewBox="0 0 10 12" fill="none"><rect x="1" y="1" width="7.5" height="10" rx="1.5" stroke="#555" stroke-width="0.9"/><path d="M3.5 5 h3 M3.5 7.5 h3" stroke="#888" stroke-width="0.8"/></svg><div class="t" style="left:1392px;top:851.24px;font-size:10.35px;line-height:10.35px;font-weight:400;color:#333;transform:scaleX(0.8696);transform-origin:left top;">16.0.56.24</div><svg class="a" style="left:1444px;top:849px;" width="13" height="12" viewBox="0 0 13 12" fill="none"><circle cx="9" cy="4" r="2.8" stroke="#444" stroke-width="0.9"/><path d="M7 6 L1.5 11 M3 9.5 l1.5 1.5" stroke="#444" stroke-width="0.9"/></svg><div class="t" style="left:1459px;top:851.24px;font-size:10.35px;line-height:10.35px;font-weight:400;color:#333;transform:scaleX(0.8696);transform-origin:left top;">657</div><svg class="a" style="left:1484px;top:850px;" width="12" height="11" viewBox="0 0 12 11" fill="none"><rect x="0.5" y="0.5" width="11" height="10" fill="#fff" stroke="#444" stroke-width="1"/><rect x="0.5" y="0.5" width="11" height="3" fill="#333"/><path d="M0.5 6.5 h11 M4.2 3 v7.5 M7.8 3 v7.5" stroke="#555" stroke-width="0.8"/></svg><div class="t" style="left:1498.5px;top:851.24px;font-size:10.35px;line-height:10.35px;font-weight:400;color:#333;transform:scaleX(0.8696);transform-origin:left top;">45 rows</div><div class="t" style="left:1540px;top:851.24px;font-size:10.35px;line-height:10.35px;font-weight:400;color:#333;transform:scaleX(0.8696);transform-origin:left top;">00:00.0</div><div class="a" style="left:5px;top:637.3px;width:307px;height:88.7px;background:#622187;border-radius:2px;box-shadow:1px 2px 3px rgba(0,0,0,0.35);"></div><div class="t" style="left:-141.5px;width:600px;text-align:center;top:663.61px;font-size:17.00px;line-height:17.00px;font-weight:400;color:#fff;">7ms, all 10 SE queries retrieved from</div><div class="t" style="left:-141.5px;width:600px;text-align:center;top:684.11px;font-size:17.00px;line-height:17.00px;font-weight:400;color:#fff;">cache!</div><svg class="a" style="left:150px;top:490px;" width="150" height="150" viewBox="0 0 150 150" fill="none">
<path d="M20.5 147.5 L52 21" stroke="#622187" stroke-width="7" fill="none"/>
<path d="M55.5 9 L41 24.4 L59.3 28 Z" fill="#622187" stroke="#622187" stroke-width="1"/>
<path d="M74.6 147.5 L74.6 126" stroke="#622187" stroke-width="7"/>
<path d="M74.6 113.3 L64 131.5 L82.2 131.5 Z" fill="#622187" stroke="#622187" stroke-width="1"/>
<path d="M121.4 147.5 L121.4 132" stroke="#622187" stroke-width="7"/>
<path d="M121.4 118 L111.9 137 L130 137 Z" fill="#622187" stroke="#622187" stroke-width="1"/>
</svg>
</body></html>
